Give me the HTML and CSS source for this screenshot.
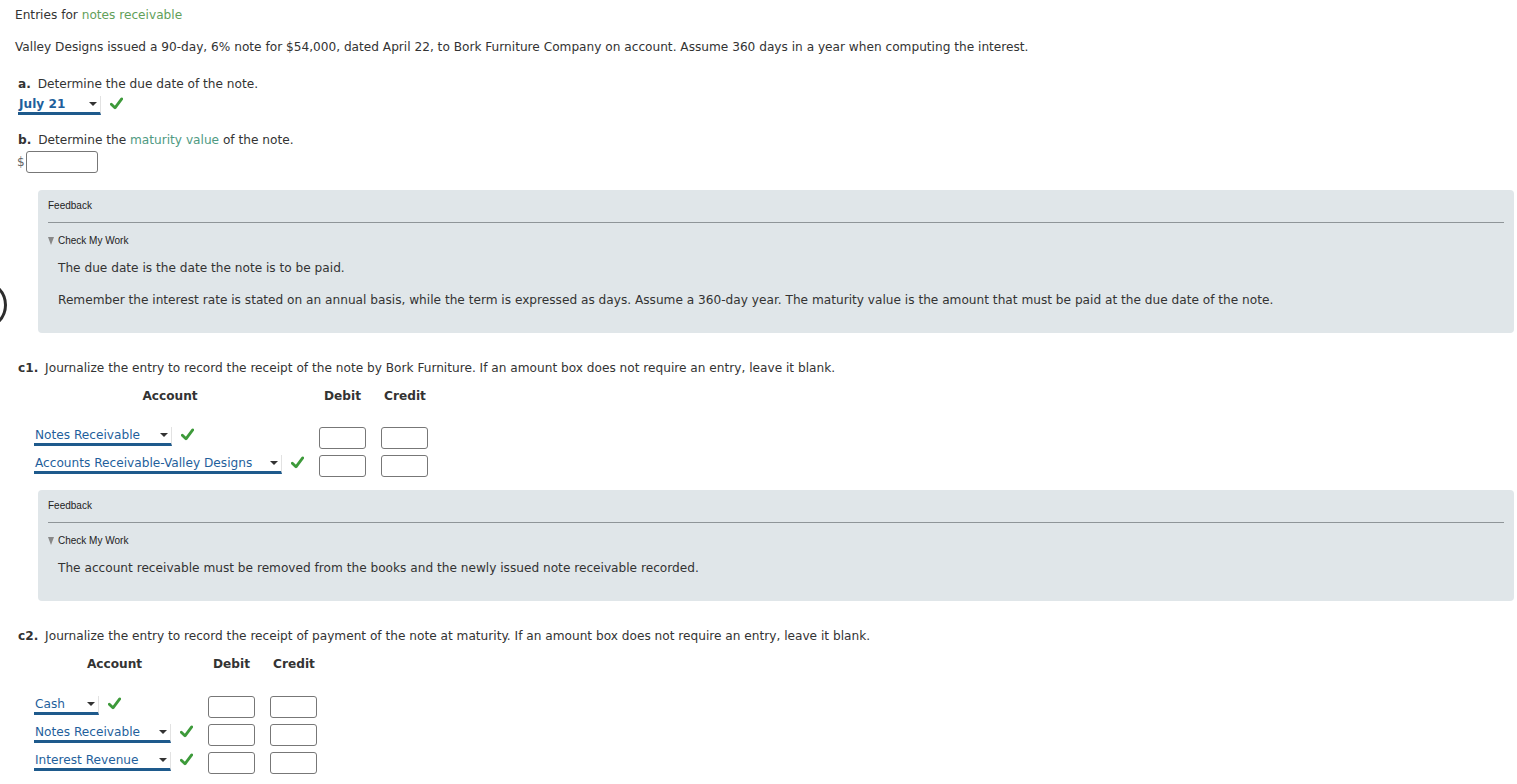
FILE: index.html
```html
<!DOCTYPE html>
<html lang="en">
<head>
    <meta charset="UTF-8">
    <title>Entries for notes receivable</title>
    <link rel="stylesheet" href="styles.css">
</head>
<body>
    <div class="scroll-ring"></div>

    <div class="page">
        <p class="title">Entries for <span class="term">notes receivable</span></p>
        <p class="intro">Valley Designs issued a 90-day, 6% note for $54,000, dated April 22, to Bork Furniture Company on account. Assume 360 days in a year when computing the interest.</p>

        <div class="part">
            <p class="prompt"><b>a.</b> Determine the due date of the note.</p>
            <div class="answer">
                <span class="dropdown bold" style="width: 83px;">July 21</span>
                <svg class="check" viewBox="0 0 12 12"><path d="M1.2 6.6 L4.6 10 L10.8 1.8" /></svg>
            </div>
        </div>

        <div class="part">
            <p class="prompt"><b>b.</b> Determine the <span class="term teal">maturity value</span> of the note.</p>
            <div class="amount-row">
                <span class="dollar">$</span>
                <span class="amount-box"></span>
            </div>
        </div>

        <div class="feedback">
            <div class="fb-label">Feedback</div>
            <div class="fb-rule"></div>
            <div class="fb-toggle"><span class="tri"></span>Check My Work</div>
            <p class="fb-text">The due date is the date the note is to be paid.</p>
            <p class="fb-text">Remember the interest rate is stated on an annual basis, while the term is expressed as days. Assume a 360-day year. The maturity value is the amount that must be paid at the due date of the note.</p>
        </div>

        <div class="part part-journal">
            <p class="prompt"><b>c1.</b> Journalize the entry to record the receipt of the note by Bork Furniture. If an amount box does not require an entry, leave it blank.</p>
            <div class="journal journal-c1">
                <div class="jh jh-account">Account</div>
                <div class="jh">Debit</div>
                <div class="jh">Credit</div>

                <div class="acct">
                    <span class="dropdown" style="width: 138px;">Notes Receivable</span>
                    <svg class="check" viewBox="0 0 12 12"><path d="M1.2 6.6 L4.6 10 L10.8 1.8" /></svg>
                </div>
                <span class="amount-box"></span>
                <span class="amount-box"></span>

                <div class="acct">
                    <span class="dropdown" style="width: 250px;">Accounts Receivable-Valley Designs</span>
                    <svg class="check" viewBox="0 0 12 12"><path d="M1.2 6.6 L4.6 10 L10.8 1.8" /></svg>
                </div>
                <span class="amount-box"></span>
                <span class="amount-box"></span>
            </div>
        </div>

        <div class="feedback">
            <div class="fb-label">Feedback</div>
            <div class="fb-rule"></div>
            <div class="fb-toggle"><span class="tri"></span>Check My Work</div>
            <p class="fb-text">The account receivable must be removed from the books and the newly issued note receivable recorded.</p>
        </div>

        <div class="part part-journal">
            <p class="prompt"><b>c2.</b> Journalize the entry to record the receipt of payment of the note at maturity. If an amount box does not require an entry, leave it blank.</p>
            <div class="journal journal-c2">
                <div class="jh jh-account">Account</div>
                <div class="jh">Debit</div>
                <div class="jh">Credit</div>

                <div class="acct">
                    <span class="dropdown" style="width: 65px;">Cash</span>
                    <svg class="check" viewBox="0 0 12 12"><path d="M1.2 6.6 L4.6 10 L10.8 1.8" /></svg>
                </div>
                <span class="amount-box"></span>
                <span class="amount-box"></span>

                <div class="acct">
                    <span class="dropdown" style="width: 138px;">Notes Receivable</span>
                    <svg class="check" viewBox="0 0 12 12"><path d="M1.2 6.6 L4.6 10 L10.8 1.8" /></svg>
                </div>
                <span class="amount-box"></span>
                <span class="amount-box"></span>

                <div class="acct">
                    <span class="dropdown" style="width: 139px;">Interest Revenue</span>
                    <svg class="check" viewBox="0 0 12 12"><path d="M1.2 6.6 L4.6 10 L10.8 1.8" /></svg>
                </div>
                <span class="amount-box"></span>
                <span class="amount-box"></span>
            </div>
        </div>
    </div>
</body>
</html>
```

FILE: styles.css
```css
html, body {
    margin: 0;
    padding: 0;
    background: #fff;
    overflow: hidden;
}
body {
    font-family: "DejaVu Sans", Verdana, sans-serif;
    font-size: 12.15px;
    line-height: 16px;
    color: #333;
    position: relative;
    height: 784px;
}
p {
    margin: 0;
}
.page {
    padding: 7px 0 0 15px;
}
.scroll-ring {
    position: absolute;
    left: -43px;
    top: 280px;
    width: 44px;
    height: 44px;
    border: 3px solid #2d2d2d;
    border-radius: 50%;
}
.term {
    color: #62a05a;
}
.term.teal {
    color: #4f9a82;
}
.intro {
    margin-top: 16px;
}
.part {
    padding-left: 3px;
}
.title + .intro + .part {
    margin-top: 21px;
}
.part + .part {
    margin-top: 17px;
}
.prompt b {
    font-weight: bold;
    margin-right: 3px;
}
.answer {
    display: flex;
    align-items: flex-start;
    margin-top: 4px;
    height: 19px;
}
.dropdown {
    box-sizing: border-box;
    display: inline-block;
    position: relative;
    height: 19px;
    line-height: 16px;
    color: #1f5f9c;
    background: #fff;
    border-right: 1px solid #e2e2e2;
    border-bottom: 3px solid #1e5a8c;
    white-space: nowrap;
    padding-left: 1px;
}
.dropdown.bold {
    font-weight: bold;
}
.dropdown::after {
    content: "";
    position: absolute;
    right: 3px;
    top: 6px;
    border-left: 4px solid transparent;
    border-right: 4px solid transparent;
    border-top: 4px solid #333;
}
.check {
    width: 13px;
    height: 13px;
    margin: 1px 0 0 9px;
    flex: none;
}
.check path {
    fill: none;
    stroke: #3d9a3a;
    stroke-width: 2.6;
    stroke-linecap: round;
    stroke-linejoin: round;
}
.amount-row {
    display: flex;
    align-items: center;
    margin-top: 3px;
}
.dollar {
    color: #666;
    font-size: 12px;
    margin-left: -1px;
}
.amount-box {
    box-sizing: border-box;
    display: inline-block;
    width: 47px;
    height: 22px;
    border: 1px solid #777;
    border-radius: 3px;
    background: #fff;
}
.amount-row .amount-box {
    width: 72px;
    margin-left: 1px;
}
.feedback {
    margin: 17px 3px 0 23px;
    background: #e0e6e9;
    border-radius: 4px;
    padding: 10px 10px 25px 10px;
}
.part-journal + .feedback {
    margin-top: 13px;
}
.fb-label, .fb-toggle {
    font-family: "Liberation Sans", Arial, sans-serif;
    font-size: 10px;
    line-height: 12px;
    color: #222;
}
.fb-rule {
    height: 1px;
    background: #8f9598;
    margin-top: 10px;
}
.fb-toggle {
    margin-top: 12px;
    display: flex;
    align-items: center;
}
.tri {
    width: 0;
    height: 0;
    border-left: 3px solid transparent;
    border-right: 3px solid transparent;
    border-top: 8px solid #888;
    margin-right: 4px;
}
.fb-text {
    margin-left: 10px;
    margin-top: 13px;
}
.fb-text + .fb-text {
    margin-top: 16px;
}
.feedback + .part-journal {
    margin-top: 27px;
}
.journal {
    display: grid;
    column-gap: 15px;
    row-gap: 6px;
    margin-top: 12px;
    align-items: start;
}
.journal-c1 {
    grid-template-columns: 286px 47px 48px;
}
.journal-c2 {
    grid-template-columns: 175px 47px 48px;
}
.jh {
    font-weight: bold;
    text-align: center;
    margin-bottom: 17px;
}
.jh-account {
    padding-left: 18px;
}
.journal-c2 .jh {
    margin-bottom: 18px;
}
.acct {
    display: flex;
    align-items: flex-start;
    padding-left: 16px;
    height: 22px;
}
```
